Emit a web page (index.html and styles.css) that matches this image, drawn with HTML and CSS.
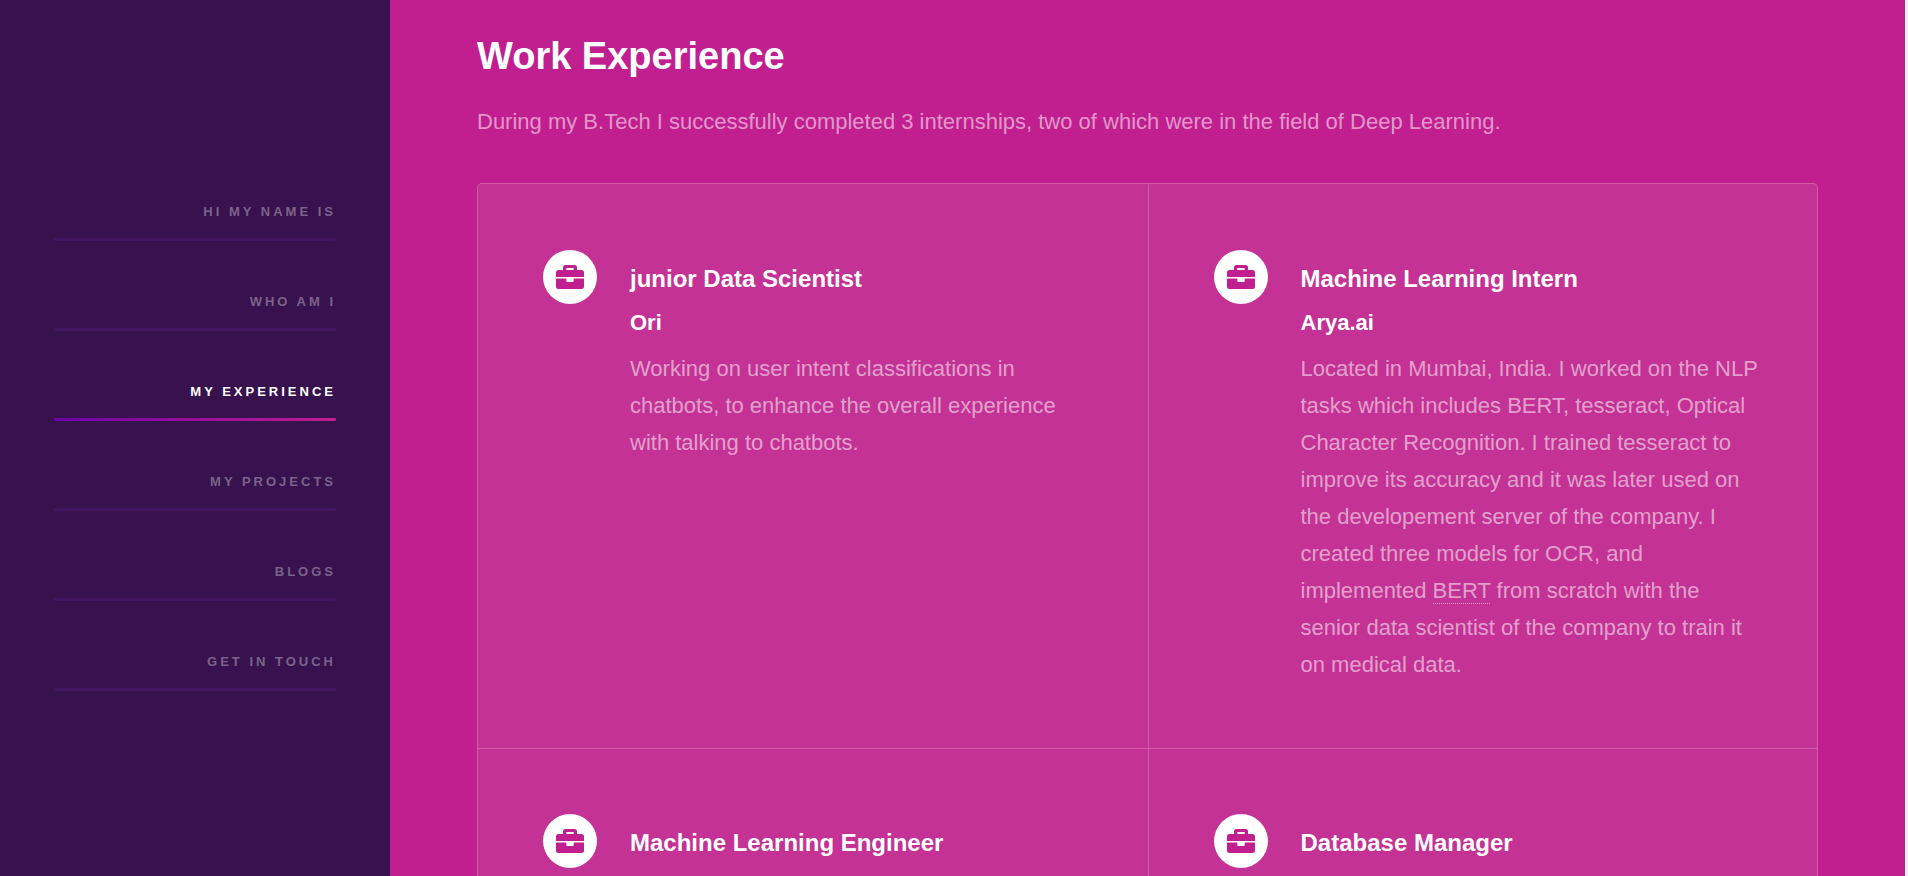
FILE: index.html
```
<!DOCTYPE html>
<html lang="en">
<head>
    <meta charset="UTF-8">
    <meta name="viewport" content="width=device-width, initial-scale=1.0">
    <title>Work Experience</title>
    <link rel="stylesheet" href="styles.css">
</head>
<body>
    <svg class="sprite" aria-hidden="true">
        <symbol id="briefcase" viewBox="0 0 28 24">
            <path d="M0 13.500h10.300v2.500a1 1 0 0 0 1 1h5.400a1 1 0 0 0 1-1v-2.500H28v8a2.500 2.500 0 0 1-2.500 2.500h-23A2.500 2.500 0 0 1 0 21.500zM7 5V2.500A2.500 2.500 0 0 1 9.500 0h9A2.500 2.500 0 0 1 21 2.500V5h4.500A2.500 2.500 0 0 1 28 7.500V12H0V7.500A2.500 2.500 0 0 1 2.500 5zM10.300 5h7.400V3h-7.400z"/>
        </symbol>
    </svg>

    <section class="sidebar">
        <nav>
            <ul>
                <li><a href="#intro">Hi my name is</a></li>
                <li><a href="#one">Who am I</a></li>
                <li><a href="#two" class="active">My experience</a></li>
                <li><a href="#three">My projects</a></li>
                <li><a href="#four">Blogs</a></li>
                <li><a href="#five">Get in touch</a></li>
            </ul>
        </nav>
    </section>

    <main class="wrapper" id="two">
        <h2>Work Experience</h2>
        <p>During my B.Tech I successfully completed 3 internships, two of which were in the field of Deep Learning.</p>
        <div class="features">
            <section>
                <span class="icon"><svg><use href="#briefcase"/></svg></span>
                <div class="text">
                    <h3>junior Data Scientist</h3>
                    <h4>Ori</h4>
                    <p>Working on user intent classifications in chatbots, to enhance the overall experience with talking to chatbots.</p>
                </div>
            </section>
            <section>
                <span class="icon"><svg><use href="#briefcase"/></svg></span>
                <div class="text">
                    <h3>Machine Learning Intern</h3>
                    <h4>Arya.ai</h4>
                    <p>Located in Mumbai, India. I worked on the NLP tasks which includes BERT, tesseract, Optical Character Recognition. I trained tesseract to improve its accuracy and it was later used on the developement server of the company. I created three models for OCR, and implemented <a href="#bert">BERT</a> from scratch with the senior data scientist of the company to train it on medical data.</p>
                </div>
            </section>
            <section>
                <span class="icon"><svg><use href="#briefcase"/></svg></span>
                <div class="text">
                    <h3>Machine Learning Engineer</h3>
                </div>
            </section>
            <section>
                <span class="icon"><svg><use href="#briefcase"/></svg></span>
                <div class="text">
                    <h3>Database Manager</h3>
                </div>
            </section>
        </div>
    </main>
</body>
</html>
```
FILE: styles.css
```
* {
    box-sizing: border-box;
}
body {
    margin: 0;
    font-family: "Liberation Sans", Arial, Helvetica, sans-serif;
    font-size: 22px;
    line-height: 37px;
    color: rgba(255, 255, 255, 0.55);
    background: #37124e;
}
h2, h3, h4, p {
    margin: 0;
}
h2, h3, h4 {
    color: #fff;
    font-weight: bold;
}
.sprite {
    display: none;
}

/* Sidebar */
.sidebar {
    position: fixed;
    top: 0;
    left: 0;
    width: 390px;
    height: 100vh;
    padding: 0 54px;
    display: flex;
    flex-direction: column;
    justify-content: center;
    background: #37124e;
}
.sidebar ul {
    list-style: none;
    margin: 0;
    padding: 0;
    display: flex;
    flex-direction: column;
    gap: 34px;
}
.sidebar a {
    display: block;
    padding-top: 16px;
    font-size: 13px;
    line-height: 22px;
    font-weight: bold;
    letter-spacing: 3px;
    text-align: right;
    text-transform: uppercase;
    text-decoration: none;
    color: rgba(255, 255, 255, 0.35);
}
.sidebar a::after {
    content: "";
    display: block;
    height: 3px;
    margin-top: 15px;
    border-radius: 1px;
    background: #421560;
}
.sidebar a.active {
    color: #fff;
}
.sidebar a.active::after {
    background: linear-gradient(to right, #6e00a8, #c21e8f);
}

/* Content */
.wrapper {
    margin-left: 390px;
    padding: 28px 87px 87px;
    border-right: 3px solid #f1f1f1;
    background: #c11e8f;
}
h2 {
    font-size: 38px;
    line-height: 57px;
    margin-bottom: 18px;
}
.features {
    display: grid;
    grid-template-columns: 1fr 1fr;
    margin-top: 43px;
    border: 1px solid rgba(255, 255, 255, 0.2);
    border-radius: 5px;
    background: #c33294;
}
.features section {
    display: flex;
    gap: 33px;
    padding: 65px 57px 65px 65px;
    border-top: 1px solid rgba(255, 255, 255, 0.2);
}
.features section:nth-child(-n+2) {
    border-top-color: transparent;
}
.features section:nth-child(even) {
    border-left: 1px solid rgba(255, 255, 255, 0.2);
}
.icon {
    flex: none;
    display: flex;
    align-items: center;
    justify-content: center;
    width: 54px;
    height: 54px;
    border-radius: 50%;
    background: #fff;
}
.icon svg {
    width: 28px;
    height: 24px;
    fill: #c11e8f;
}
.text {
    padding-top: 11px;
}
h3 {
    font-size: 24px;
    line-height: 36px;
}
h4 {
    font-size: 22px;
    line-height: 33px;
    margin: 9px 0 11px;
}
.text a {
    color: inherit;
    text-decoration: none;
    border-bottom: 1px dotted rgba(255, 255, 255, 0.5);
}
```
